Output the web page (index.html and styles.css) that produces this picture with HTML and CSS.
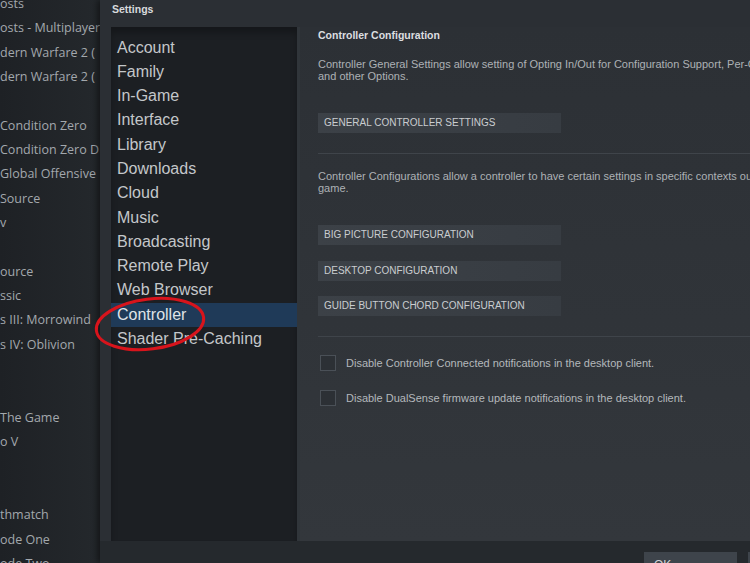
FILE: index.html
```html
<!DOCTYPE html>
<html lang="en">
<head>
  <meta charset="UTF-8">
  <meta name="viewport" content="width=device-width, initial-scale=1.0">
  <title>Settings</title>
  <link rel="stylesheet" href="styles.css">
</head>
<body>
  <div class="app">
    <div class="library">
      <div class="game">osts</div>
      <div class="game">osts - Multiplayer</div>
      <div class="game">dern Warfare 2 (</div>
      <div class="game">dern Warfare 2 (</div>
      <div class="game"></div>
      <div class="game">Condition Zero</div>
      <div class="game">Condition Zero D</div>
      <div class="game">Global Offensive</div>
      <div class="game">Source</div>
      <div class="game">v</div>
      <div class="game"></div>
      <div class="game">ource</div>
      <div class="game">ssic</div>
      <div class="game">s III: Morrowind</div>
      <div class="game">s IV: Oblivion</div>
      <div class="game"></div>
      <div class="game"></div>
      <div class="game">The Game</div>
      <div class="game">o V</div>
      <div class="game"></div>
      <div class="game"></div>
      <div class="game">thmatch</div>
      <div class="game">ode One</div>
      <div class="game">ode Two</div>
    </div>

    <div class="dialog">
      <div class="title">Settings</div>
      <div class="dialog-body">
        <div class="nav">
          <div class="nav-item">Account</div>
          <div class="nav-item">Family</div>
          <div class="nav-item">In-Game</div>
          <div class="nav-item">Interface</div>
          <div class="nav-item">Library</div>
          <div class="nav-item">Downloads</div>
          <div class="nav-item">Cloud</div>
          <div class="nav-item">Music</div>
          <div class="nav-item">Broadcasting</div>
          <div class="nav-item">Remote Play</div>
          <div class="nav-item">Web Browser</div>
          <div class="nav-item active">Controller</div>
          <div class="nav-item">Shader Pre-Caching</div>
        </div>
        <div class="content">
          <div class="heading">Controller Configuration</div>
          <p class="desc">Controller General Settings allow setting of Opting In/Out for Configuration Support, Per-Game Settings<br>and other Options.</p>
          <div class="btn first">General Controller Settings</div>
          <div class="sep"></div>
          <p class="desc">Controller Configurations allow a controller to have certain settings in specific contexts outside of a<br>game.</p>
          <div class="btn first-cfg">Big Picture Configuration</div>
          <div class="btn">Desktop Configuration</div>
          <div class="btn">Guide Button Chord Configuration</div>
          <div class="sep sep2"></div>
          <div class="check"><span class="box"></span>Disable Controller Connected notifications in the desktop client.</div>
          <div class="check"><span class="box"></span>Disable DualSense firmware update notifications in the desktop client.</div>
        </div>
      </div>
      <div class="footer">
        <div class="ok">OK</div>
        <div class="cancel"></div>
      </div>
    </div>
  </div>

  <!-- red marker drawn over the screenshot -->
  <svg class="marker" width="130" height="70" viewBox="0 0 130 70">
    <ellipse cx="65" cy="35" rx="54" ry="25" fill="none" stroke="#d8141c" stroke-width="3" transform="rotate(-7 65 35)"/>
  </svg>
</body>
</html>
```

FILE: styles.css
```css
body {
  margin: 0;
  width: 750px;
  height: 563px;
  overflow: hidden;
  background: #1f2226;
  position: relative;
}

.app {
  display: flex;
  height: 563px;
}

.library {
  width: 100px;
  flex-shrink: 0;
  overflow: hidden;
  white-space: nowrap;
  background: linear-gradient(90deg, #1e2125, #24282c);
  font-family: "Open Sans", "Noto Sans", sans-serif;
  font-size: 12.5px;
  color: #a3a8ad;
  margin-top: -8px;
}

.game {
  height: 24.35px;
  line-height: 24.35px;
}

.dialog {
  flex: 1;
  display: flex;
  flex-direction: column;
  background: #2b2f34;
  box-shadow: -3px 0 6px rgba(0,0,0,0.45);
  min-width: 0;
}

.title {
  height: 27px;
  padding-left: 12px;
  font-family: "Liberation Sans", Arial, sans-serif;
  font-weight: bold;
  font-size: 10.5px;
  line-height: 19px;
  color: #d8dadc;
}

.dialog-body {
  flex: 1;
  display: flex;
  padding-left: 11px;
  min-height: 0;
}

.nav {
  width: 186px;
  flex-shrink: 0;
  background: #1c1f23;
  box-shadow: inset 0 6px 6px rgba(0,0,0,0.25);
  padding-top: 8.5px;
  font-family: "Liberation Sans", Arial, sans-serif;
  font-size: 16px;
  color: #c4c7ca;
  border-right: 3px solid #30353a;
}

.nav-item {
  height: 24.3px;
  line-height: 24.3px;
  padding-left: 6px;
}

.nav-item.active {
  background: #1f3a58;
  color: #dfe3e7;
}

.content {
  width: 600px;
  flex-shrink: 0;
  padding: 1px 0 0 18px;
  font-family: "Liberation Sans", Arial, sans-serif;
  background: linear-gradient(180deg, #2c3035, #33373c);
}

.heading {
  font-size: 10.5px;
  font-weight: bold;
  line-height: 14px;
  color: #dcdee0;
}

.desc {
  margin: 16px 0 0;
  white-space: nowrap;
  font-size: 11px;
  line-height: 12px;
  color: #adb1b5;
}

.btn {
  width: 237px;
  height: 20px;
  line-height: 20px;
  padding-left: 6px;
  margin-top: 15.5px;
  background: linear-gradient(90deg, #3c4147, #373c42);
  font-size: 10px;
  text-transform: uppercase;
  color: #cacdd0;
}

.btn.first {
  margin-top: 31px;
}

.btn.first-cfg {
  margin-top: 31px;
}

.sep {
  height: 1px;
  background: #3f444a;
  margin-top: 20px;
}

.sep2 {
  margin-top: 20px;
  margin-bottom: 8px;
}

.check {
  display: flex;
  align-items: center;
  height: 35px;
  font-size: 11px;
  color: #b4b8bc;
}

.box {
  width: 14px;
  height: 14px;
  border: 1px solid #4a5057;
  background: #2c3035;
  margin: 0 10px 0 2px;
}

.footer {
  height: 22px;
  background: #25292d;
  display: flex;
  align-items: flex-start;
  padding-top: 11px;
  padding-left: 544px;
  gap: 11px;
  box-sizing: border-box;
  overflow: hidden;
}

.ok {
  width: 93px;
  height: 24px;
  flex-shrink: 0;
  background: #3e444b;
  color: #d0d3d6;
  font-family: "Liberation Sans", Arial, sans-serif;
  font-size: 12px;
  padding: 6px 0 0 10px;
  box-sizing: border-box;
}

.cancel {
  width: 93px;
  height: 24px;
  flex-shrink: 0;
  background: #3e444b;
}

.marker {
  position: absolute;
  left: 85px;
  top: 289px;
}
```
